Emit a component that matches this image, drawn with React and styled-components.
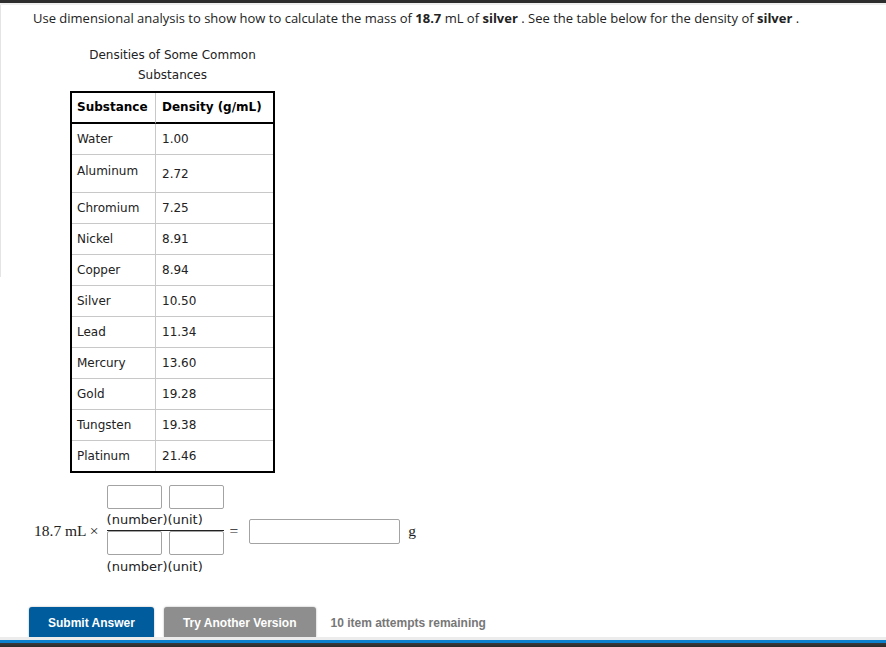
import styled, { createGlobalStyle } from "styled-components";

const GlobalStyle = createGlobalStyle`
  body {
    margin: 0;
    background: #fff;
  }
  * {
    box-sizing: border-box;
  }
`;

const Page = styled.div`
  display: flex;
  flex-direction: column;
  height: 100vh;
  min-height: 647px;
`;

const TopBar = styled.div`
  height: 5px;
  background: #2d2d2d;
  border-bottom: 2px solid #eeeeee;
`;

const BottomBar = styled.div`
  height: 10px;
  border-top: 3px solid #ececec;
  background: linear-gradient(#0b80cc 0 3px, #3a3a3a 3px, #2a2a2a);
`;

const Content = styled.div`
  flex: 1;
  display: flex;
  flex-direction: column;
  padding: 4px 0 0 33px;
  background: linear-gradient(#e4e4e4, #e4e4e4) left top / 1px 272px no-repeat;
`;

const Question = styled.p`
  margin: 0;
  font-family: "Open Sans", sans-serif;
  font-size: 13px;
  line-height: 18px;
  color: #222;

  b {
    font-weight: 700;
  }
`;

const DensityTable = styled.table`
  margin: 18px 0 0 37px;
  width: 205px;
  table-layout: fixed;
  border-collapse: separate;
  border-spacing: 0;
  border: 2px solid #000;
  font-family: "DejaVu Sans", Verdana, sans-serif;
  font-size: 12px;
  color: #222;
`;

const Caption = styled.caption`
  padding-bottom: 6px;
  line-height: 20px;
  text-align: center;
  color: #222;
`;

const HeadCell = styled.th`
  padding: 7px 6px;
  line-height: 15px;
  font-weight: 700;
  color: #000;
  text-align: left;
  border-bottom: 2px solid #000;
  white-space: nowrap;

  &:first-child {
    width: 84px;
    padding-left: 5px;
    border-right: 1px solid #c8c8c8;
  }
`;

const Row = styled.tr`
  &:last-child td {
    border-bottom: none;
  }
`;

const Cell = styled.td`
  padding: ${(p) => (p.$tall ? "11px 6px 10px" : "7px 6px")};
  line-height: 16px;
  border-bottom: 1px solid #c8c8c8;
  vertical-align: middle;

  &:first-child {
    border-right: 1px solid #c8c8c8;
    padding: ${(p) => (p.$tall ? "8px 5px 13px" : "7px 5px")};
  }
`;

const MathRow = styled.div`
  display: flex;
  align-items: center;
  margin: 12px 0 0 1px;
`;

const MathText = styled.span`
  font-family: "Liberation Serif", "Times New Roman", serif;
  font-size: 15.5px;
  color: #222;
  white-space: nowrap;
  margin: ${(p) => p.$margin || "0"};
`;

const Fraction = styled.div`
  display: flex;
  flex-direction: column;
  margin-left: 8px;
`;

const FracPart = styled.div`
  display: flex;
  flex-direction: column;
`;

const BoxRow = styled.div`
  display: flex;
  gap: 7px;
`;

const UnitBox = styled.input`
  width: 55px;
  height: 24px;
  border: 1px solid #a3a3a3;
  border-radius: 2px;
  background: #fff;
  padding: 0 4px;
  outline: none;
`;

const FracLabel = styled.div`
  font-family: "DejaVu Sans", Verdana, sans-serif;
  font-size: 13px;
  line-height: 20px;
  padding-top: ${(p) => (p.$top ? "1px" : "2px")};
  color: #222;
  white-space: nowrap;
`;

const FracBar = styled.div`
  height: 1px;
  background: #222;
`;

const AnswerBox = styled.input`
  width: 151px;
  height: 25px;
  border: 1px solid #a3a3a3;
  border-radius: 2px;
  background: #fff;
  padding: 0 4px;
  outline: none;
`;

const ButtonRow = styled.div`
  display: flex;
  align-items: center;
  gap: 10px;
  margin: auto 0 0 -4px;
`;

const Button = styled.button`
  height: 30px;
  padding: 2px 19px 0;
  border: none;
  border-radius: 3px 3px 0 0;
  background: ${(p) => (p.$secondary ? "#8e8e8e" : "#005c9d")};
  box-shadow: 0 0 2px rgba(0, 0, 0, 0.35);
  color: #fff;
  font-family: "Liberation Sans", Arial, sans-serif;
  font-size: 12px;
  font-weight: 700;
  cursor: pointer;
`;

const Attempts = styled.span`
  margin: 2px 0 0 5px;
  font-family: "Liberation Sans", Arial, sans-serif;
  font-size: 12px;
  font-weight: 700;
  color: #777;
`;

const densities = [
  ["Water", "1.00"],
  ["Aluminum", "2.72", true],
  ["Chromium", "7.25"],
  ["Nickel", "8.91"],
  ["Copper", "8.94"],
  ["Silver", "10.50"],
  ["Lead", "11.34"],
  ["Mercury", "13.60"],
  ["Gold", "19.28"],
  ["Tungsten", "19.38"],
  ["Platinum", "21.46"],
];

function FractionInput() {
  return (
    <Fraction>
      <FracPart>
        <BoxRow>
          <UnitBox aria-label="numerator number" />
          <UnitBox aria-label="numerator unit" />
        </BoxRow>
        <FracLabel $top>(number)(unit)</FracLabel>
      </FracPart>
      <FracBar />
      <FracPart>
        <BoxRow>
          <UnitBox aria-label="denominator number" />
          <UnitBox aria-label="denominator unit" />
        </BoxRow>
        <FracLabel>(number)(unit)</FracLabel>
      </FracPart>
    </Fraction>
  );
}

export default function App() {
  return (
    <>
      <GlobalStyle />
      <Page>
        <TopBar />
        <Content>
          <Question>
            Use dimensional analysis to show how to calculate the mass of <b>18.7</b> mL of{" "}
            <b>silver</b> . See the table below for the density of <b>silver</b> .
          </Question>

          <DensityTable>
            <Caption>Densities of Some Common Substances</Caption>
            <thead>
              <tr>
                <HeadCell>Substance</HeadCell>
                <HeadCell>Density (g/mL)</HeadCell>
              </tr>
            </thead>
            <tbody>
              {densities.map(([name, value, tall]) => (
                <Row key={name}>
                  <Cell $tall={tall}>{name}</Cell>
                  <Cell $tall={tall}>{value}</Cell>
                </Row>
              ))}
            </tbody>
          </DensityTable>

          <MathRow>
            <MathText>18.7 mL ×</MathText>
            <FractionInput />
            <MathText $margin="0 11px 0 6px">=</MathText>
            <AnswerBox aria-label="answer" />
            <MathText $margin="0 0 0 8px">g</MathText>
          </MathRow>

          <ButtonRow>
            <Button>Submit Answer</Button>
            <Button $secondary>Try Another Version</Button>
            <Attempts>10 item attempts remaining</Attempts>
          </ButtonRow>
        </Content>
        <BottomBar />
      </Page>
    </>
  );
}
